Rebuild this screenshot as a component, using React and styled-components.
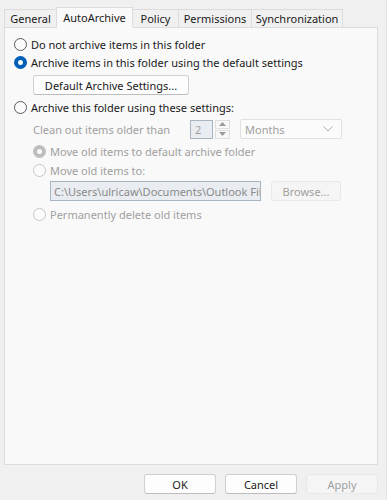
import styled, { createGlobalStyle } from "styled-components"

const Global = createGlobalStyle`
body {
  margin: 0;
  background: #f0f0f0;
  font-family: "Noto Sans", "Open Sans", sans-serif;
  font-size: 11px;
  color: #1a1a1a;
}
`

const Window = styled.div`
width: 387px;
height: 500px;
box-sizing: border-box;
display: flex;
flex-direction: column;
padding-top: 7px;
border-right: 1px solid #e4e4e4;
`

const TabBar = styled.div`
display: flex;
align-items: flex-end;
padding-left: 5px;
height: 20px;
position: relative;
z-index: 1;
`

const Tab = styled.div`
width: ${p => p.$w}px;
height: ${p => (p.$active ? "21px" : "18px")};
box-sizing: border-box;
display: flex;
align-items: center;
justify-content: center;
background: ${p => (p.$active ? "#f9f9f9" : "#f0f0f0")};
border: 1px solid #dcdcdc;
border-bottom: ${p => (p.$active ? "1px solid #f9f9f9" : "none")};
margin-left: -1px;
margin-bottom: ${p => (p.$active ? "-1px" : "0")};
white-space: nowrap;
`

const Panel = styled.div`
margin: 0 8px 0 4px;
height: 438px;
box-sizing: border-box;
background: #f9f9f9;
border: 1px solid #dcdcdc;
padding: 7px 0 0 9px;
display: flex;
flex-direction: column;
`

const Row = styled.div`
display: flex;
align-items: center;
height: 18px;
margin-top: ${p => p.$mt || 0}px;
margin-left: ${p => p.$ml || 0}px;
color: ${p => (p.$disabled ? "#a0a0a0" : "#1a1a1a")};
white-space: nowrap;
`

const Radio = styled.span`
width: 13px;
height: 13px;
box-sizing: border-box;
border-radius: 50%;
margin-right: 4px;
flex-shrink: 0;
background: #fbfbfb;
border: ${p =>
  p.$checked
    ? p.$disabled
      ? "4px solid #bdbdbd"
      : "4px solid #005fb8"
    : p.$disabled
    ? "1px solid #c6c6c6"
    : "1px solid #5c5c5c"};
`

const Button = styled.button`
font: inherit;
width: ${p => p.$w}px;
height: 20px;
padding: 0;
border-radius: 3px;
background: ${p => (p.disabled ? "#f5f5f5" : "#fdfdfd")};
border: 1px solid ${p => (p.disabled ? "#e8e8e8" : "#d0d0d0")};
border-bottom-color: ${p => (p.disabled ? "#e8e8e8" : "#bcbcbc")};
color: ${p => (p.disabled ? "#a0a0a0" : "#1a1a1a")};
`

const SettingsButton = styled(Button)`
margin: 4px 0 3px 19px;
flex-shrink: 0;
`

const CleanRow = styled.div`
display: flex;
align-items: center;
height: 20px;
margin: 3px 0 3px 19px;
color: #a0a0a0;
white-space: nowrap;
`

const CleanLabel = styled.span`
width: 157px;
`

const SpinBox = styled.div`
width: 23px;
height: 19px;
box-sizing: border-box;
border: 1px solid #a9b4c2;
background: #e9edf2;
display: flex;
align-items: center;
padding-left: 4px;
`

const SpinArrows = styled.div`
width: 15px;
height: 19px;
margin-left: 2px;
display: flex;
flex-direction: column;
gap: 1px;
`

const SpinHalf = styled.div`
flex: 1;
border: 1px solid #dedede;
background: #f7f7f7;
display: flex;
align-items: center;
justify-content: center;
`

const Select = styled.div`
width: 102px;
height: 20px;
box-sizing: border-box;
margin-left: 10px;
border: 1px solid #e1e1e1;
background: #fbfbfb;
border-radius: 2px;
display: flex;
align-items: center;
justify-content: space-between;
padding: 0 8px 0 4px;
`

const PathRow = styled.div`
display: flex;
align-items: center;
margin: 2px 0 4px 36px;
`

const PathInput = styled.div`
width: 211px;
height: 20px;
box-sizing: border-box;
border: 1px solid #a9b4c2;
background: #e9edf2;
color: #8a8a8a;
display: flex;
align-items: center;
padding-left: 3px;
overflow: hidden;
white-space: nowrap;
`

const BrowseButton = styled(Button)`
margin-left: 10px;
`

const Footer = styled.div`
display: flex;
justify-content: flex-end;
gap: 9px;
padding: 9px 8px 0 0;
`

function Arrow({ up }) {
  return (
    <svg width="7" height="4" viewBox="0 0 7 4">
      <path d={up ? "M0 4 L3.5 0 L7 4 Z" : "M0 0 L3.5 4 L7 0 Z"} fill="#9a9a9a" />
    </svg>
  )
}

function Chevron() {
  return (
    <svg width="10" height="6" viewBox="0 0 10 6">
      <path d="M0.5 0.5 L5 5 L9.5 0.5" fill="none" stroke="#b0b0b0" strokeWidth="1" />
    </svg>
  )
}

export default function App() {
  const tabs = [
    { name: "General", w: 53 },
    { name: "AutoArchive", w: 77, active: true },
    { name: "Policy", w: 47 },
    { name: "Permissions", w: 74 },
    { name: "Synchronization", w: 92 },
  ]
  return (
    <Window>
      <Global />
      <TabBar>
        {tabs.map(t => (
          <Tab key={t.name} $active={t.active} $w={t.w}>{t.name}</Tab>
        ))}
      </TabBar>
      <Panel>
        <Row><Radio />Do not archive items in this folder</Row>
        <Row><Radio $checked />Archive items in this folder using the default settings</Row>
        <SettingsButton $w={156}>Default Archive Settings...</SettingsButton>
        <Row><Radio />Archive this folder using these settings:</Row>
        <CleanRow>
          <CleanLabel>Clean out items older than</CleanLabel>
          <SpinBox>2</SpinBox>
          <SpinArrows>
            <SpinHalf><Arrow up /></SpinHalf>
            <SpinHalf><Arrow /></SpinHalf>
          </SpinArrows>
          <Select>Months<Chevron /></Select>
        </CleanRow>
        <Row $ml={19} $disabled><Radio $checked $disabled />Move old items to default archive folder</Row>
        <Row $ml={19} $mt={1} $disabled><Radio $disabled />Move old items to:</Row>
        <PathRow>
          <PathInput>C:\Users\ulricaw\Documents\Outlook Files</PathInput>
          <BrowseButton $w={70} disabled>Browse...</BrowseButton>
        </PathRow>
        <Row $ml={19} $disabled><Radio $disabled />Permanently delete old items</Row>
      </Panel>
      <Footer>
        <Button $w={72}>OK</Button>
        <Button $w={72}>Cancel</Button>
        <Button $w={72} disabled>Apply</Button>
      </Footer>
    </Window>
  )
}
